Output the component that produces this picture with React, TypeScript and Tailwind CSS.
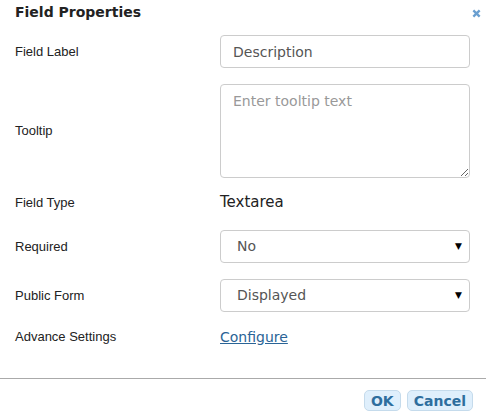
import React from 'react';

const labelCls = "text-[13px] text-[#222] font-['Liberation_Sans',Arial,sans-serif]";
const boxFont = "font-['DejaVu_Sans',Verdana,sans-serif] text-[14px]";

const SelectBox = ({ value }: { value: string }) => (
    <div className={`flex h-[33px] w-[250px] items-center justify-between rounded-[4px] border border-[#cccccc] bg-white pl-[16px] pr-[7px] text-[#555] ${boxFont}`}>
        <span>{value}</span>
        <span className="text-[9px] text-black">▼</span>
    </div>
);

const App = () => {
    return (
        <div className="h-[415px] w-[486px] overflow-hidden bg-white">
            {/* Header */}
            <div className="flex h-[35px] items-start justify-between pl-[15px] pr-[5px] pt-[2px]">
                <h1 className="text-[14px] font-bold text-[#222] font-['DejaVu_Sans',Verdana,sans-serif]">
                    Field Properties
                </h1>
                <svg className="mt-[7px] h-[9px] w-[9px]" viewBox="0 0 10 10">
                    <path d="M1.5 1.5 L8.5 8.5 M8.5 1.5 L1.5 8.5" stroke="#6a9fd0" strokeWidth={2.6} />
                </svg>
            </div>

            {/* Form rows */}
            <div className="flex flex-col px-[15px]">
                <div className="grid h-[33px] grid-cols-[205px_250px] items-center">
                    <span className={labelCls}>Field Label</span>
                    <div className={`flex h-[33px] items-center rounded-[4px] border border-[#cccccc] pl-[12px] pt-[1px] text-[#555] ${boxFont}`}>
                        Description
                    </div>
                </div>

                <div className="mt-[16px] grid h-[94px] grid-cols-[205px_250px] items-center">
                    <span className={labelCls}>Tooltip</span>
                    <textarea
                        placeholder="Enter tooltip text"
                        className={`h-[94px] w-[250px] rounded-[4px] border border-[#cccccc] px-[12px] py-[6px] text-[#555] outline-none placeholder:text-[#999] ${boxFont}`}
                    />
                </div>

                <div className="grid h-[50px] grid-cols-[205px_250px] items-center pb-[1px]">
                    <span className={labelCls}>Field Type</span>
                    <span className="text-[15px] text-[#222] font-['DejaVu_Sans',Verdana,sans-serif]">Textarea</span>
                </div>

                <div className="mt-[2px] grid h-[33px] grid-cols-[205px_250px] items-center">
                    <span className={labelCls}>Required</span>
                    <SelectBox value="No" />
                </div>

                <div className="mt-[16px] grid h-[33px] grid-cols-[205px_250px] items-center">
                    <span className={labelCls}>Public Form</span>
                    <SelectBox value="Displayed" />
                </div>

                <div className="grid h-[50px] grid-cols-[205px_250px] items-center">
                    <span className={labelCls}>Advance Settings</span>
                    <a href="#" className={`text-[#2a6496] underline ${boxFont}`}>Configure</a>
                </div>
            </div>

            {/* Footer */}
            <div className="mt-[16px] border-t border-[#aaaaaa]" />
            <div className="flex justify-end gap-[6px] pr-[13px] pt-[11px]">
                <button className="h-[21px] rounded-[5px] border border-[#c5dbec] bg-[#dfeffc] px-[6px] text-[14px] font-bold leading-none text-[#2e6e9e] font-['DejaVu_Sans',Verdana,sans-serif]">
                    OK
                </button>
                <button className="h-[21px] rounded-[5px] border border-[#c5dbec] bg-[#dfeffc] px-[6px] text-[14px] font-bold leading-none text-[#2e6e9e] font-['DejaVu_Sans',Verdana,sans-serif]">
                    Cancel
                </button>
            </div>
        </div>
    );
};

export default App;
